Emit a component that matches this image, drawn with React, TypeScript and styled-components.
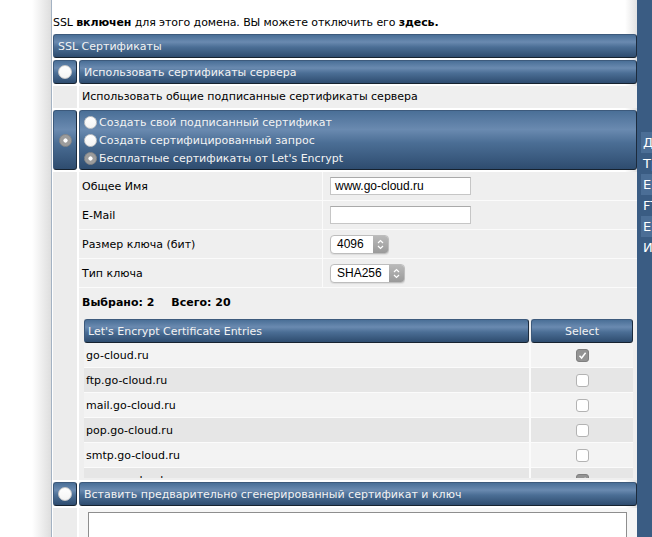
import React from "react"
import styled, { createGlobalStyle } from "styled-components"

const GlobalStyle = createGlobalStyle`
  html, body {
    margin: 0;
    padding: 0;
  }
  body {
    font-family: "DejaVu Sans", Verdana, sans-serif;
    font-size: 11px;
    color: #000;
    background: #fff;
  }
`

const Page = styled.div`
  display: flex;
  height: 537px;
  overflow: hidden;
`

const Gutter = styled.div`
  width: 51px;
  flex: none;
  background: linear-gradient(90deg, #fff 0, #fff 32px, #dedede 51px);
`

const Main = styled.main`
  flex: none;
  width: 584px;
  border-left: 1px solid #a3b2c3;
  padding: 16px 0 0 1px;
  background: linear-gradient(90deg, #fff calc(100% - 12px), #e2e2e2 100%);
`

const Intro = styled.p`
  margin: 0 0 4px;
  line-height: 14px;
  white-space: nowrap;
  letter-spacing: -0.1px;
`

const Layout = styled.div`
  display: grid;
  grid-template-columns: 24px 1fr;
  gap: 2px;
`

const Bar = styled.div<{ $span?: boolean; $tall?: boolean }>`
  grid-column: ${(p) => (p.$span ? "1 / -1" : "auto")};
  box-sizing: border-box;
  min-height: 24px;
  display: flex;
  flex-direction: ${(p) => (p.$tall ? "column" : "row")};
  align-items: ${(p) => (p.$tall ? "stretch" : "center")};
  padding: ${(p) => (p.$tall ? "2px 4px" : "0 4px")};
  color: #f3f3f3;
  border: 1px solid;
  border-color: #3d5a7c #1c2b3d #16222f #3d5a7c;
  border-radius: 3px;
  background: linear-gradient(
    #4a6f97 0%,
    #6a8ab0 32%,
    #4b6e95 55%,
    #2e4c6f 100%
  );
  white-space: nowrap;
`

const RadioCell = styled(Bar)`
  justify-content: center;
  padding: 0;
`

const Cell = styled.div`
  background: #ececec;
`

const PlainRow = styled.div`
  background: #efefef;
  height: 22px;
  line-height: 22px;
  padding-left: 3px;
  white-space: nowrap;
`

const Option = styled.label`
  display: flex;
  align-items: center;
  gap: 2px;
  height: 18px;
`

const Radio = styled.span<{ $checked?: boolean; $big?: boolean }>`
  flex: none;
  box-sizing: border-box;
  width: ${(p) => (p.$big ? 14 : 13)}px;
  height: ${(p) => (p.$big ? 14 : 13)}px;
  border-radius: 50%;
  border: 1px solid ${(p) => (p.$checked ? "#878787" : "#c9c9c9")};
  background: ${(p) =>
    p.$checked
      ? "radial-gradient(circle, #fff 0 1.8px, #9c9c9c 2.4px)"
      : "linear-gradient(#fff, #f4f4f4)"};
`

const FormCell = styled.div`
  background: #efefef;
  padding-bottom: 2px;
`

const FormRow = styled.div`
  display: grid;
  grid-template-columns: 244px 1fr;
  height: 29px;
  box-sizing: border-box;
  border-bottom: 1px solid #fbfbfb;
`

const Label = styled.div`
  display: flex;
  align-items: center;
  padding-left: 3px;
  border-right: 1px solid #fbfbfb;
`

const Field = styled.div`
  display: flex;
  align-items: center;
  padding-left: 7px;
`

const TextInput = styled.div`
  box-sizing: border-box;
  width: 141px;
  height: 18px;
  padding-left: 4px;
  border: 1px solid #c6c6c6;
  border-top-color: #a9a9a9;
  background: #fff;
  font: 12px/16px "Liberation Sans", Arial, sans-serif;
`

const Select = styled.div<{ $w: number }>`
  box-sizing: border-box;
  display: flex;
  width: ${(p) => p.$w}px;
  height: 19px;
  border: 1px solid #bdbdbd;
  border-radius: 4px;
  overflow: hidden;
  background: #fff;
  box-shadow: 0 1px 1px rgba(0, 0, 0, 0.08);
  font: 12px/17px "Liberation Sans", Arial, sans-serif;
`

const SelectValue = styled.span`
  flex: 1;
  padding-left: 6px;
`

const Stepper = styled.span`
  width: 15px;
  display: flex;
  align-items: center;
  justify-content: center;
  background: linear-gradient(#b9b9b9, #9a9a9a);
`

const Summary = styled.div`
  height: 28px;
  display: flex;
  align-items: center;
  gap: 17px;
  padding-left: 3px;
  font-weight: bold;
`

const EntriesBox = styled.div`
  margin: 3px 4px 0 5px;
  height: 159px;
  overflow: hidden;
`

const EntryGrid = styled.div<{ $head?: boolean }>`
  display: grid;
  grid-template-columns: 1fr 102px;
  gap: 2px;
  height: ${(p) => (p.$head ? 24 : 25)}px;
  box-sizing: border-box;
  background: ${(p) => (p.$head ? "transparent" : "#fbfbfb")};
  border-bottom: ${(p) => (p.$head ? "0" : "1px solid #fbfbfb")};
`

const HeadBar = styled(Bar)<{ $center?: boolean }>`
  justify-content: ${(p) => (p.$center ? "center" : "flex-start")};
  padding: 0 3px;
`

const EntryCell = styled.div<{ $alt?: boolean; $center?: boolean }>`
  display: flex;
  align-items: center;
  justify-content: ${(p) => (p.$center ? "center" : "flex-start")};
  padding-left: ${(p) => (p.$center ? 0 : 2)}px;
  background: ${(p) => (p.$alt ? "#e6e6e6" : "#f3f3f3")};
`

const Check = styled.span<{ $checked?: boolean }>`
  box-sizing: border-box;
  width: 13px;
  height: 13px;
  border-radius: 3px;
  display: flex;
  align-items: center;
  justify-content: center;
  border: 1px solid ${(p) => (p.$checked ? "#7f7f7f" : "#b3b3b3")};
  background: ${(p) => (p.$checked ? "#939393" : "#fff")};
`

const PasteCell = styled.div`
  background: #f6f6f6;
  height: 40px;
  padding: 4px 10px 0 9px;
`

const TextArea = styled.div`
  height: 80px;
  border: 1px solid #8e8e8e;
  background: #fff;
`

const Sidebar = styled.nav`
  flex: 1;
  background: #3a5c83;
  padding-top: 132px;
  overflow: hidden;
`

const NavItem = styled.div<{ $alt?: boolean }>`
  margin-left: 4px;
  padding-left: 2px;
  height: 21px;
  line-height: 21px;
  color: #fff;
  font-size: 13px;
  white-space: nowrap;
  background: ${(p) => (p.$alt ? "#4b6e96" : "transparent")};
`

const StepperIcon = () => (
  <svg width="7" height="11" viewBox="0 0 7 11">
    <path d="M1 4 L3.5 1.5 L6 4 M1 7 L3.5 9.5 L6 7" fill="none" stroke="#fff" strokeWidth="1.2" />
  </svg>
)

const CheckMark = () => (
  <svg width="9" height="9" viewBox="0 0 9 9">
    <path d="M1.5 4.8 L3.6 7 L7.6 1.8" fill="none" stroke="#fff" strokeWidth="1.5" />
  </svg>
)

const entries = [
  { name: "go-cloud.ru", checked: true },
  { name: "ftp.go-cloud.ru", checked: false },
  { name: "mail.go-cloud.ru", checked: false },
  { name: "pop.go-cloud.ru", checked: false },
  { name: "smtp.go-cloud.ru", checked: false },
  { name: "www.go-cloud.ru", checked: true },
]

const navItems = ["Домены", "Трафик", "Email аккаунты", "FTP", "Email", "Информация"]

export default function App() {
  return (
    <Page>
      <GlobalStyle />
      <Gutter />
      <Main>
        <Intro>
          SSL <b>включен</b> для этого домена. ВЫ можете отключить его <b>здесь.</b>
        </Intro>
        <Layout>
          <Bar $span>SSL Сертификаты</Bar>

          <RadioCell>
            <Radio $big />
          </RadioCell>
          <Bar>Использовать сертификаты сервера</Bar>

          <Cell />
          <PlainRow>Использовать общие подписанные сертификаты сервера</PlainRow>

          <RadioCell>
            <Radio $checked />
          </RadioCell>
          <Bar $tall>
            <Option>
              <Radio />
              Создать свой подписанный сертификат
            </Option>
            <Option>
              <Radio />
              Создать сертифицированный запрос
            </Option>
            <Option>
              <Radio $checked />
              Бесплатные сертификаты от Let's Encrypt
            </Option>
          </Bar>

          <Cell />
          <FormCell>
            <FormRow>
              <Label>Общее Имя</Label>
              <Field>
                <TextInput>www.go-cloud.ru</TextInput>
              </Field>
            </FormRow>
            <FormRow>
              <Label>E-Mail</Label>
              <Field>
                <TextInput />
              </Field>
            </FormRow>
            <FormRow>
              <Label>Размер ключа (бит)</Label>
              <Field>
                <Select $w={59}>
                  <SelectValue>4096</SelectValue>
                  <Stepper>
                    <StepperIcon />
                  </Stepper>
                </Select>
              </Field>
            </FormRow>
            <FormRow>
              <Label>Тип ключа</Label>
              <Field>
                <Select $w={75}>
                  <SelectValue>SHA256</SelectValue>
                  <Stepper>
                    <StepperIcon />
                  </Stepper>
                </Select>
              </Field>
            </FormRow>
            <Summary>
              <span>Выбрано: 2</span>
              <span>Всего: 20</span>
            </Summary>
            <EntriesBox>
              <EntryGrid $head>
                <HeadBar>Let's Encrypt Certificate Entries</HeadBar>
                <HeadBar $center>Select</HeadBar>
              </EntryGrid>
              {entries.map((e, i) => (
                <EntryGrid key={e.name}>
                  <EntryCell $alt={i % 2 === 1}>{e.name}</EntryCell>
                  <EntryCell $alt={i % 2 === 1} $center>
                    <Check $checked={e.checked}>{e.checked && <CheckMark />}</Check>
                  </EntryCell>
                </EntryGrid>
              ))}
            </EntriesBox>
          </FormCell>

          <RadioCell>
            <Radio $big />
          </RadioCell>
          <Bar>Вставить предварительно сгенерированный сертификат и ключ</Bar>

          <Cell />
          <PasteCell>
            <TextArea />
          </PasteCell>
        </Layout>
      </Main>
      <Sidebar>
        {navItems.map((n, i) => (
          <NavItem key={n} $alt={i % 2 === 0}>
            {n}
          </NavItem>
        ))}
      </Sidebar>
    </Page>
  )
}
